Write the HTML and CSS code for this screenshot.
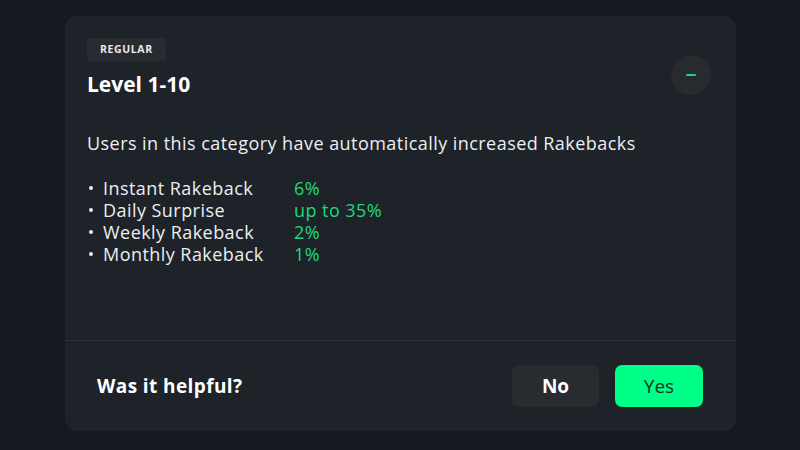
FILE: index.html
```html
<!DOCTYPE html>
<html>
<head>
<meta charset="utf-8">
<link rel="stylesheet" href="styles.css">
</head>
<body>
<div class="card">
  <div class="body">
    <div class="head">
      <div class="head-text">
        <span class="badge">REGULAR</span>
        <h1 class="title">Level 1-10</h1>
      </div>
      <button class="toggle" aria-label="collapse"><span class="dash"></span></button>
    </div>
    <p class="desc">Users in this category have automatically increased Rakebacks</p>
    <ul class="list">
      <li><span class="label">Instant Rakeback</span><span class="value">6%</span></li>
      <li><span class="label">Daily Surprise</span><span class="value">up to 35%</span></li>
      <li><span class="label">Weekly Rakeback</span><span class="value">2%</span></li>
      <li><span class="label">Monthly Rakeback</span><span class="value">1%</span></li>
    </ul>
  </div>
  <div class="foot">
    <span class="question">Was it helpful?</span>
    <div class="actions">
      <button class="btn btn-no">No</button>
      <button class="btn btn-yes">Yes</button>
    </div>
  </div>
</div>
</body>
</html>
```
FILE: styles.css
```css
* { box-sizing: border-box; }
html, body { margin: 0; padding: 0; }
body {
  background: #161a20;
  font-family: "Open Sans", "Noto Sans", sans-serif;
  color: #ffffff;
  width: 800px;
  height: 450px;
  overflow: hidden;
  padding: 16px 0 0 65px;
}
.card {
  width: 671px;
  height: 415px;
  background: #1e2229;
  border-radius: 12px;
  display: flex;
  flex-direction: column;
}
.body {
  flex: 1;
  padding: 22px 25px 0 22px;
  border-bottom: 1px solid #2c3038;
}
.head {
  display: flex;
  justify-content: space-between;
  align-items: flex-start;
}
.head-text { display: flex; flex-direction: column; align-items: flex-start; }
.badge {
  display: inline-block;
  height: 23px;
  line-height: 23px;
  padding: 0 13px;
  background: #282c31;
  border-radius: 4px;
  font-size: 10.5px;
  font-weight: 700;
  color: #e6e8ea;
  letter-spacing: 0.6px;
}
.title {
  margin: 9px 0 0;
  font-size: 21px;
  font-weight: 700;
  line-height: 28px;
}
.toggle {
  margin-top: 17px;
  width: 40px;
  height: 40px;
  border-radius: 50%;
  border: none;
  background: #272b2f;
  display: flex;
  align-items: center;
  justify-content: center;
  padding: 0;
}
.dash {
  display: block;
  width: 10px;
  height: 2px;
  background: #1fd87a;
  border-radius: 1px;
}
.desc {
  margin: 33px 0 0;
  font-size: 18px;
  line-height: 24px;
  letter-spacing: 0.45px;
  color: #eceef0;
}
.list {
  list-style: none;
  margin: 22px 0 0;
  padding: 0;
}
.list li {
  display: flex;
  align-items: center;
  font-size: 18px;
  line-height: 22px;
  letter-spacing: 0.45px;
  color: #eceef0;
}
.list li::before {
  content: "";
  width: 4px;
  height: 4px;
  border-radius: 50%;
  background: #eceef0;
  margin: 0 10px 0 2px;
}
.label { width: 191px; }
.value { color: #1fd87a; }
.foot {
  height: 90px;
  display: flex;
  align-items: center;
  justify-content: space-between;
  padding: 0 33px 0 32px;
}
.question {
  font-size: 19px;
  font-weight: 700;
  letter-spacing: 0.4px;
}
.actions { display: flex; gap: 16px; }
.btn {
  width: 87px;
  height: 42px;
  border: none;
  border-radius: 7px;
  font-family: "Open Sans", "Noto Sans", sans-serif;
  font-size: 19px;
}
.btn-no {
  background: #282c30;
  color: #ffffff;
  font-weight: 700;
}
.btn-yes {
  width: 88px;
  background: #00ff88;
  color: #14331f;
  font-weight: 500;
}
```
